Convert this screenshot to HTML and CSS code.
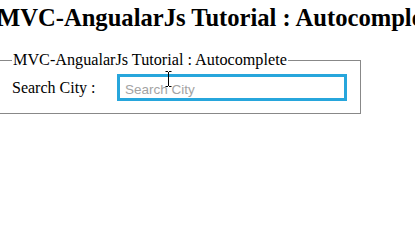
FILE: index.html
```html
<!DOCTYPE html>
<html>
<head>
<meta charset="utf-8">
<link rel="stylesheet" href="styles.css">
</head>
<body>
<div class="page">
  <h2 class="title">MVC-AngualarJs Tutorial : Autocomplete</h2>
  <fieldset class="box">
    <legend class="box-legend">MVC-AngualarJs Tutorial : Autocomplete</legend>
    <div class="row">
      <label class="row-label" for="city">Search City :</label>
      <div class="field">
        <input id="city" class="city-input" type="text" placeholder="Search City">
        <svg class="ibeam" width="7" height="16" viewBox="0 0 7 16"><path d="M0.5 0.5h2.5M4 0.5h2.5M3.5 1v14M0.5 15.5h2.5M4 15.5h2.5" stroke="#000" stroke-width="1" fill="none"/></svg>
      </div>
    </div>
  </fieldset>
</div>
</body>
</html>
```
FILE: styles.css
```css
html, body {
  margin: 0;
  padding: 0;
  background: #fff;
  overflow: hidden;
}
.page {
  margin-left: -3px;
  width: 366px;
  font-family: "Liberation Serif", "Times New Roman", serif;
  color: #000;
}
.title {
  margin: 4px 0 0 0;
  font-size: 24.6px;
  line-height: 28px;
  font-weight: bold;
  white-space: nowrap;
}
.box {
  margin: 19px 0 0 2px;
  padding: 0 12px 12px 12px;
  border: 1px solid #888;
  width: 336px;
}
.box-legend {
  padding: 0 1px;
  font-size: 16.2px;
  line-height: 18px;
}
.row {
  display: flex;
  align-items: flex-start;
  padding-top: 5px;
}
.row-label {
  font-size: 16px;
  line-height: 18px;
  width: 105px;
  padding-top: 5px;
}
.field {
  position: relative;
}
.city-input {
  box-sizing: border-box;
  width: 230px;
  height: 27px;
  margin: 0;
  border: 3px solid #27a6dc;
  padding: 3px 5px 0 5px;
  font-family: "Liberation Sans", Arial, sans-serif;
  font-size: 13.5px;
  outline: none;
  background: #fff;
}
.city-input::placeholder {
  color: #a3a3a3;
}
.ibeam {
  position: absolute;
  left: 48px;
  top: -3px;
}
```
